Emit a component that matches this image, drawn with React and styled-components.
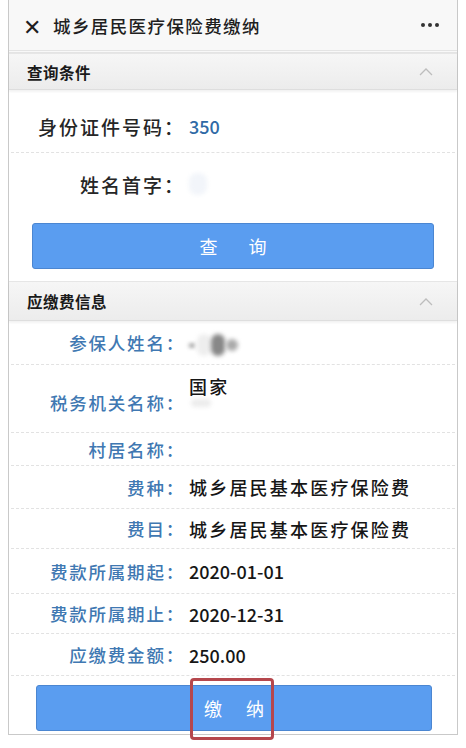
import styled, { createGlobalStyle } from "styled-components";

const GlobalStyle = createGlobalStyle`
  html, body {
    margin: 0;
    padding: 0;
    background: #ffffff;
  }
  body {
    font-family: "Noto Sans CJK SC", "Noto Sans", "Liberation Sans", sans-serif;
  }
`;

const Page = styled.div`
  min-height: 748px;
  padding-left: 8px;
  box-sizing: border-box;
`;

const Frame = styled.div`
  width: 448px;
  height: 734px;
  border-left: 1px solid #c9c9c9;
  border-right: 1px solid #c9c9c9;
  border-bottom: 1px solid #c9c9c9;
  background: #fff;
  display: flex;
  flex-direction: column;
`;

const TitleBar = styled.div`
  height: 50px;
  flex-shrink: 0;
  display: flex;
  align-items: center;
  padding: 0 18px 0 14px;
  background: #f8f8f8;
  border-bottom: 3px double #e4e4e4;
  color: #1f1f1f;
`;

const CloseMark = styled.span`
  font-size: 22px;
  line-height: 1;
  width: 30px;
  font-weight: 300;
`;

const Title = styled.div`
  flex: 1;
  font-size: 17.5px;
  font-weight: 500;
  letter-spacing: 1.4px;
`;

const MoreDots = styled.div`
  display: flex;
  gap: 3px;
  span {
    width: 4px;
    height: 4px;
    border-radius: 50%;
    background: #333;
  }
`;

const SectionHeader = styled.div`
  height: ${(p) => p.h || 37}px;
  flex-shrink: 0;
  display: flex;
  align-items: center;
  justify-content: space-between;
  padding: 0 24px 0 18px;
  background: linear-gradient(#f6f6f6, #ececec);
  border-top: 1px solid #e6e6e6;
  border-bottom: 1px solid #dedede;
  box-shadow: 0 2px 2px rgba(0, 0, 0, 0.05);
  font-size: 15.5px;
  font-weight: 700;
  color: #1a1a1a;
  letter-spacing: 0.5px;
`;

const QueryBody = styled.div`
  display: flex;
  flex-direction: column;
`;

const Row = styled.div`
  height: ${(p) => p.h}px;
  flex-shrink: 0;
  display: flex;
  align-items: ${(p) => (p.top ? "flex-start" : "center")};
  padding-top: ${(p) => p.pt || 0}px;
  box-sizing: border-box;
  border-bottom: ${(p) => (p.line ? "1px dashed #e2e2e2" : "none")};
  margin: 0 2px;
`;

const Label = styled.div`
  width: 174px;
  flex-shrink: 0;
  text-align: right;
  font-size: ${(p) => (p.blue ? 17.5 : 19)}px;
  font-weight: 500;
  letter-spacing: ${(p) => (p.blue ? 1.8 : 2)}px;
  color: ${(p) => (p.blue ? "#4078b2" : "#262626")};
  align-self: center;
`;

const Value = styled.div`
  margin-left: 4px;
  font-size: 18px;
  font-weight: 500;
  letter-spacing: ${(p) => (p.wide ? 2.2 : 0)}px;
  color: ${(p) => p.color || "#161616"};
  display: flex;
  flex-direction: column;
`;

const Redacted = styled.span`
  display: inline-block;
  width: ${(p) => p.w}px;
  height: ${(p) => p.hh || 20}px;
  border-radius: 8px;
  background: ${(p) => p.bg};
  filter: blur(2px);
  vertical-align: middle;
  margin-left: ${(p) => p.ml || 0}px;
`;

const ButtonWrap = styled.div`
  position: relative;
  flex-shrink: 0;
  margin: ${(p) => p.m};
`;

const BlueButton = styled.div`
  height: 46px;
  display: flex;
  align-items: center;
  justify-content: center;
  background: #5a9df0;
  border: 1px solid #4b86d1;
  border-radius: 3px;
  box-sizing: border-box;
  color: #fff;
  font-size: 18px;
  letter-spacing: ${(p) => p.gap}px;
  padding-left: ${(p) => p.gap}px;
`;

const RedMark = styled.div`
  position: absolute;
  left: 154px;
  top: -7px;
  width: 84px;
  height: 62px;
  box-sizing: border-box;
  border: 3px solid #b5474d;
  border-radius: 4px;
`;

const Chevron = () => (
  <svg width="14" height="9" viewBox="0 0 14 9">
    <path d="M1 8 L7 2 L13 8" fill="none" stroke="#bdbdbd" strokeWidth="1.3" />
  </svg>
);

const info = [
  { label: "村居名称：", value: "", h: 33 },
  { label: "费种：", value: "城乡居民基本医疗保险费", h: 43, wide: true },
  { label: "费目：", value: "城乡居民基本医疗保险费", h: 40, wide: true },
  { label: "费款所属期起：", value: "2020-01-01", h: 45 },
  { label: "费款所属期止：", value: "2020-12-31", h: 40 },
  { label: "应缴费金额：", value: "250.00", h: 42 },
];

export default function App() {
  return (
    <Page>
      <GlobalStyle />
      <Frame>
        <TitleBar>
          <CloseMark>✕</CloseMark>
          <Title>城乡居民医疗保险费缴纳</Title>
          <MoreDots>
            <span />
            <span />
            <span />
          </MoreDots>
        </TitleBar>
        <SectionHeader h={35}>
          查询条件
          <Chevron />
        </SectionHeader>
        <QueryBody>
          <Row h={63} pt={10} line>
            <Label>身份证件号码：</Label>
            <Value color="#2f6aa6">
              <span>350</span>
            </Value>
          </Row>
          <Row h={62}>
            <Label>姓名首字：</Label>
            <Value>
              <Redacted w={18} hh={22} bg="#f2f5fa" />
            </Value>
          </Row>
        </QueryBody>
        <ButtonWrap m="8px 23px 12px 23px">
          <BlueButton gap={6.5}>查　询</BlueButton>
        </ButtonWrap>
        <SectionHeader h={38}>
          应缴费信息
          <Chevron />
        </SectionHeader>
        <Row h={44} line>
          <Label blue>参保人姓名：</Label>
          <Value>
            <span>
              <Redacted w={6} hh={3} bg="#666" />
              <Redacted w={14} hh={22} bg="#eeeeee" ml={2} />
              <Redacted w={14} hh={22} bg="#888" />
              <Redacted w={12} hh={12} bg="#aaa" ml={1} />
            </span>
          </Value>
        </Row>
        <Row h={68} top pt={8} line>
          <Label blue>税务机关名称：</Label>
          <Value wide>
            <span>国家</span>
            <Redacted w={20} hh={8} bg="#ececec" ml={2} />
          </Value>
        </Row>
        {info.map((r) => (
          <Row key={r.label} h={r.h} line>
            <Label blue>{r.label}</Label>
            <Value wide={r.wide}>{r.value}</Value>
          </Row>
        ))}
        <ButtonWrap m="9px 25px 0 27px">
          <BlueButton gap={3}>缴　纳</BlueButton>
          <RedMark />
        </ButtonWrap>
      </Frame>
    </Page>
  );
}
